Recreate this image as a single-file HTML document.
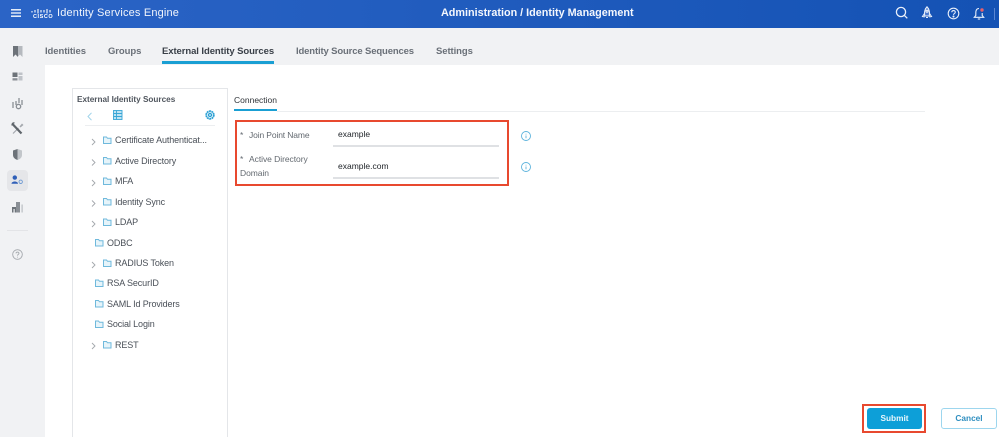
<!DOCTYPE html>
<html><head><meta charset="utf-8">
<style>
html,body{margin:0;padding:0;width:999px;height:437px;overflow:hidden;background:#f1f2f4;font-family:"Liberation Sans",sans-serif;}
#w{position:absolute;left:0;top:0;width:999px;height:437px;filter:blur(.3px);overflow:hidden;}
.t{position:absolute;white-space:nowrap;line-height:12px;}
.a{position:absolute;}
.tab{font-size:9.5px;font-weight:bold;color:#6a7078;top:45.5px;letter-spacing:-.08px;}
.tr{font-size:9px;color:#4a5058;letter-spacing:-.12px;}
.lb{font-size:8.5px;color:#636970;letter-spacing:-.05px;}
svg{position:absolute;overflow:visible;}
</style></head><body><div id="w">
<div class="a" style="left:0;top:0;width:999px;height:28px;background:linear-gradient(90deg,#2b64c6,#1452b4);"></div>
<svg style="left:11px;top:9px" width="10" height="8"><path d="M0 .8H10M0 4H10M0 7.2H10" stroke="#fff" stroke-width="1.3" fill="none"/></svg>
<svg style="left:31px;top:8.500px" width="21" height="5"><path d="M1 2v1.500M4 1v2.500M7 0v4.500M10 1v2.500M13 1v2.500M16 0v4.500M19 1v2.500" stroke="#fff" stroke-width="1.100"/></svg>
<div class="t" style="left:33px;top:14.500px;font-size:5.500px;line-height:5px;font-weight:bold;color:#fff;letter-spacing:.55px;">CISCO</div>
<div class="t" style="left:57px;top:6.500px;font-size:11px;line-height:13px;color:#f1f5fc;letter-spacing:.17px;">Identity Services Engine</div>
<div class="t" style="left:441px;top:6.500px;font-size:10.800px;line-height:13px;font-weight:bold;color:#f4f7fd;">Administration / Identity Management</div>
<svg style="left:895px;top:6px" width="14" height="14" fill="none" stroke="#e8effa" stroke-width="1.300"><circle cx="6" cy="6" r="4.600"/><path d="M9.400 9.400L12.300 12.300"/></svg>
<svg style="left:921px;top:6px" width="12" height="14" fill="none" stroke="#e8effa" stroke-width="1.100"><path d="M6 .8C8.400 3 8.900 7 8.300 10H3.700C3.100 7 3.600 3 6 .8Z" fill="#4d7bce"/><circle cx="6" cy="5.200" r="1"/><path d="M3.500 7.500L1.500 10.500 3.700 11M8.500 7.500L10.500 10.500 8.300 11M5 11.500H7"/></svg>
<svg style="left:947px;top:7px" width="14" height="14" fill="none" stroke="#e8effa" stroke-width="1.100"><circle cx="6.500" cy="6.500" r="5.300"/><path d="M4.800 5.200C4.800 3 8.300 3 8.300 5.100 8.300 6.500 6.500 6.500 6.500 7.900"/><circle cx="6.500" cy="9.600" r=".5" fill="#e8effa"/></svg>
<svg style="left:973px;top:7px" width="13" height="14" fill="none" stroke="#e8effa" stroke-width="1.100"><path d="M6 1.500C3.500 1.500 2.800 3.500 2.800 6V8.500L1.300 10.300H10.700L9.200 8.500V6"/><path d="M4.800 12H7.200"/><circle cx="9" cy="3" r="1.700" fill="#e8606a" stroke="none"/></svg>
<div class="a" style="left:994px;top:8px;width:1px;height:12px;background:#5a86d2;"></div>

<!-- sidebar -->
<svg style="left:13px;top:46px" width="10" height="11"><path d="M0 0H5V11L2.500 8.500 0 11Z" fill="#6d7379"/><path d="M5 0H9.500V11L7 8.500 5 10.500Z" fill="#b5b9be"/></svg>
<svg style="left:12px;top:72px" width="11" height="10"><rect x="0.500" y="0.500" width="5" height="4.500" fill="#6d7379"/><rect x="6.500" y="0.500" width="4" height="2.500" fill="#bfc3c8"/><rect x="6.500" y="4" width="4" height="4.500" fill="#bfc3c8"/><rect x="0.500" y="6.200" width="5" height="2.300" fill="#8a8f95"/></svg>
<svg style="left:12px;top:97px" width="12" height="13" fill="none" stroke="#8a8f95" stroke-width="1.300"><path d="M1 5V11M4 4V8M7 1V6M10 3V8"/><circle cx="6.500" cy="9.500" r="2.200"/></svg>
<svg style="left:11px;top:122px" width="13" height="13" fill="none"><path d="M2 11.500L7.500 6" stroke="#a5a9ae" stroke-width="1.200"/><path d="M1.500 2L10.500 11.500" stroke="#5f656b" stroke-width="2.200"/><path d="M1 3.500C.5 1.800 2 .5 3.500 1" stroke="#5f656b" stroke-width="1.200"/><path d="M8.500 4.500L11 1.500 12.500 3 9.500 5.500" fill="#a5a9ae"/></svg>
<svg style="left:12px;top:148px" width="11" height="13"><path d="M5.500 1L1 2.500V7C1 9.500 3 11.200 5.500 12Z" fill="#6d7379"/><path d="M5.500 1L10 2.500V7C10 9.500 8 11.200 5.500 12Z" fill="#c2c6ca"/></svg>
<div class="a" style="left:7px;top:170px;width:21px;height:21px;background:#e5e6e9;border-radius:4px;"></div>
<svg style="left:11px;top:175px" width="13" height="11"><circle cx="3.800" cy="2.600" r="2.200" fill="#2f5fb8"/><path d="M.5 8.800C.5 5.800 7 5.800 7 8.800Z" fill="#2f5fb8"/><circle cx="9.700" cy="6.800" r="1.700" fill="none" stroke="#6f9bd3" stroke-width=".9"/></svg>
<svg style="left:11px;top:201px" width="13" height="12"><rect x="1" y="6" width="5" height="5.500" fill="#6d7379"/><rect x="5" y="1" width="4" height="10.500" fill="#8a8f95"/><rect x="10.500" y="3.500" width="1.200" height="8" fill="#b9bdc2"/><rect x="2.500" y="8" width="1.200" height="3.500" fill="#f1f2f4"/></svg>
<div class="a" style="left:7px;top:230px;width:21px;height:1px;background:#e3e4e7;"></div>
<svg style="left:12px;top:249px" width="11" height="11" fill="none" stroke="#a3a7ac" stroke-width=".9"><circle cx="5.500" cy="5.500" r="4.800"/><path d="M4 4.400C4 2.600 7 2.600 7 4.300 7 5.400 5.500 5.400 5.500 6.600M5.500 7.700V8.500"/></svg>

<!-- tabs -->
<div class="t tab" style="left:45px;">Identities</div>
<div class="t tab" style="left:108px;">Groups</div>
<div class="t tab" style="left:162px;color:#3a4048;">External Identity Sources</div>
<div class="t tab" style="left:296px;letter-spacing:-.14px;">Identity Source Sequences</div>
<div class="t tab" style="left:436px;">Settings</div>
<div class="a" style="left:162px;top:61px;width:112px;height:3px;background:#1a9fd3;"></div>

<!-- main panel -->
<div class="a" style="left:45px;top:65px;width:954px;height:372px;background:#fff;"></div>

<!-- tree panel -->
<div class="a" style="left:72px;top:88px;width:156px;height:349px;box-sizing:border-box;border:1px solid #e4e6e9;border-bottom:0;background:#fff;"></div>
<div class="t" style="left:77px;top:94px;font-size:8.200px;font-weight:bold;color:#50565e;">External Identity Sources</div>
<svg style="left:87px;top:112px" width="6" height="9" fill="none" stroke="#9fd3ea" stroke-width="1"><path d="M4.500 .8L1 4.500 4.500 8.200"/></svg>
<svg style="left:113px;top:110px" width="10" height="10"><rect x=".5" y=".5" width="8.500" height="9" fill="#bfe3f3" stroke="#39a6d6" stroke-width=".9"/><path d="M.5 3.500H9M.5 6.500H9M3.500 .5V9.500" stroke="#39a6d6" stroke-width=".9" fill="none"/></svg>
<svg style="left:205px;top:110px" width="10" height="10"><circle cx="5" cy="5" r="3.800" fill="none" stroke="#2a9fd3" stroke-width="1.800" stroke-dasharray="1.900 .5"/><circle cx="5" cy="5" r="2.200" fill="#2a9fd3"/><circle cx="5" cy="5" r="1" fill="#bfe3f3"/></svg>
<div class="a" style="left:85px;top:125px;width:130px;height:1px;background:#eceef0;"></div>

<svg style="left:0;top:0" width="240" height="437" fill="none">
<g stroke="#a3a7ac" stroke-width=".9">
<path d="M92 139L95 142 92 145M92 159.500L95 162.500 92 165.500M92 180L95 183 92 186M92 200.500L95 203.500 92 206.500M92 221L95 224 92 227M92 262L95 265 92 268M92 343L95 346 92 349"/>
</g>
<g stroke="#6fb9dc" stroke-width="1" fill="#e6f4fa">
<path d="M103.500 137H106.500L107.500 138.300H111V143.500H103.500Z"/>
<path d="M103.500 157.500H106.500L107.500 158.800H111V164H103.500Z"/>
<path d="M103.500 178H106.500L107.500 179.300H111V184.500H103.500Z"/>
<path d="M103.500 198.500H106.500L107.500 199.800H111V205H103.500Z"/>
<path d="M103.500 219H106.500L107.500 220.300H111V225.500H103.500Z"/>
<path d="M95.500 239.500H98.500L99.500 240.800H103V246H95.500Z"/>
<path d="M103.500 260H106.500L107.500 261.300H111V266.500H103.500Z"/>
<path d="M95.500 280H98.500L99.500 281.300H103V286.500H95.500Z"/>
<path d="M95.500 300.500H98.500L99.500 301.800H103V307H95.500Z"/>
<path d="M95.500 321H98.500L99.500 322.300H103V327.500H95.500Z"/>
<path d="M103.500 341.500H106.500L107.500 342.800H111V348H103.500Z"/>
</g>
</svg>
<div class="t tr" style="left:115px;top:134px;">Certificate Authenticat...</div>
<div class="t tr" style="left:115px;top:154.500px;">Active Directory</div>
<div class="t tr" style="left:115px;top:175px;">MFA</div>
<div class="t tr" style="left:115px;top:195.500px;">Identity Sync</div>
<div class="t tr" style="left:115px;top:216px;">LDAP</div>
<div class="t tr" style="left:107px;top:236.500px;">ODBC</div>
<div class="t tr" style="left:115px;top:257px;">RADIUS Token</div>
<div class="t tr" style="left:107px;top:277px;">RSA SecurID</div>
<div class="t tr" style="left:107px;top:297.500px;">SAML Id Providers</div>
<div class="t tr" style="left:107px;top:318px;">Social Login</div>
<div class="t tr" style="left:115px;top:338.500px;">REST</div>

<!-- connection -->
<div class="t" style="left:234px;top:94px;font-size:8.500px;color:#2e3338;">Connection</div>
<div class="a" style="left:234px;top:109px;width:43px;height:2px;background:#1a9fd3;"></div>
<div class="a" style="left:277px;top:111px;width:648px;height:1px;background:#eceef0;"></div>

<div class="a" style="left:235px;top:120px;width:274px;height:66px;box-sizing:border-box;border:2px solid #e8492f;"></div>
<div class="t lb" style="left:240px;top:128.500px;">*</div>
<div class="t lb" style="left:249px;top:128.500px;letter-spacing:-.13px;">Join Point Name</div>
<div class="t lb" style="left:240px;top:153px;">*</div>
<div class="t lb" style="left:249px;top:153px;">Active Directory</div>
<div class="t lb" style="left:240px;top:167px;">Domain</div>
<div class="t" style="left:338px;top:128px;font-size:8.500px;color:#22262b;">example</div>
<div class="a" style="left:333px;top:145px;width:166px;height:2px;background:#dfe1e4;"></div>
<div class="t" style="left:338px;top:160px;font-size:8.500px;color:#22262b;">example.com</div>
<div class="a" style="left:333px;top:177px;width:166px;height:2px;background:#dfe1e4;"></div>
<svg style="left:521px;top:131px" width="10" height="10" fill="none" stroke="#5db3dc" stroke-width=".9"><circle cx="5" cy="5" r="4.500"/><path d="M5 4.500V7.300M5 2.800V3.500"/></svg>
<svg style="left:521px;top:162px" width="10" height="10" fill="none" stroke="#5db3dc" stroke-width=".9"><circle cx="5" cy="5" r="4.500"/><path d="M5 4.500V7.300M5 2.800V3.500"/></svg>

<!-- buttons -->
<div class="a" style="left:862px;top:404px;width:64px;height:29px;box-sizing:border-box;border:2px solid #e8492f;"></div>
<div class="a" style="left:867px;top:408px;width:55px;height:21px;background:#0d9fd8;border-radius:3px;color:#eaf7fd;font-size:8.300px;font-weight:bold;line-height:21px;text-align:center;">Submit</div>
<div class="a" style="left:941px;top:408px;width:56px;height:21px;box-sizing:border-box;border:1px solid #9dd6ee;border-radius:3px;background:#fff;color:#2f8fc0;font-size:8.300px;font-weight:bold;line-height:19px;text-align:center;">Cancel</div>
</div></body></html>
